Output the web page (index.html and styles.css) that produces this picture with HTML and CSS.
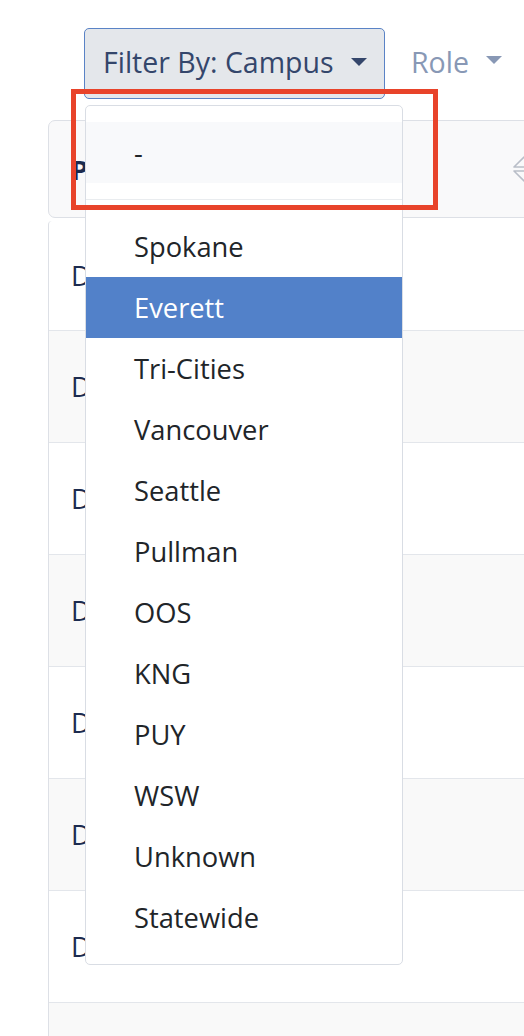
FILE: index.html
```html
<!DOCTYPE html>
<html>
<head>
<meta charset="utf-8">
<link rel="stylesheet" href="styles.css">
</head>
<body>
<div class="page">
  <div class="toolbar">
    <div class="filter">
      <button class="btn-filter">Filter By: Campus <span class="caret"></span></button>
      <div class="menu">
        <div class="item item-blank">-</div>
        <div class="divider"></div>
        <div class="item">Spokane</div>
        <div class="item active">Everett</div>
        <div class="item">Tri-Cities</div>
        <div class="item">Vancouver</div>
        <div class="item">Seattle</div>
        <div class="item">Pullman</div>
        <div class="item">OOS</div>
        <div class="item">KNG</div>
        <div class="item">PUY</div>
        <div class="item">WSW</div>
        <div class="item">Unknown</div>
        <div class="item">Statewide</div>
      </div>
    </div>
    <button class="btn-role">Role <span class="caret caret-light"></span></button>
  </div>
  <div class="table">
    <div class="thead">
      <span class="th">P</span>
      <svg class="sort" width="24" height="26" viewBox="0 0 24 26"><path d="M12 1 L2 11 L22 11 Z M2 15 L22 15 L12 25 Z" fill="none" stroke="#b9bec8" stroke-width="1.6" stroke-linejoin="round"/></svg>
    </div>
    <div class="tbody">
      <div class="row row-first">D</div>
      <div class="row alt">D</div>
      <div class="row">D</div>
      <div class="row alt">D</div>
      <div class="row">D</div>
      <div class="row alt">D</div>
      <div class="row">D</div>
      <div class="row alt"></div>
    </div>
  </div>
  <div class="highlight-box"></div>
</div>
</body>
</html>
```
FILE: styles.css
```css
html, body {
  margin: 0;
  padding: 0;
  background: #ffffff;
}
body {
  width: 524px;
  height: 1036px;
  overflow: hidden;
  font-family: "Open Sans", "Liberation Sans", sans-serif;
}
.page {
  position: relative;
  width: 524px;
  height: 1036px;
  overflow: hidden;
}
.toolbar {
  display: flex;
  align-items: flex-start;
  padding: 28px 0 0 84px;
  gap: 26px;
  height: 120px;
  box-sizing: border-box;
}
.filter {
  position: relative;
}
.btn-filter, .btn-role {
  font-family: inherit;
  font-size: 28.5px;
  display: flex;
  align-items: center;
  gap: 17px;
  cursor: pointer;
  padding-bottom: 4px;
}
.btn-filter {
  height: 71px;
  width: 301px;
  padding-left: 18px;
  padding-right: 0;
  padding-top: 0;
  box-sizing: border-box;
  background: #e4e7eb;
  border: 1.5px solid #5a83c6;
  border-radius: 5px;
  color: #34466b;
  white-space: nowrap;
}
.btn-role {
  height: 71px;
  padding-left: 0;
  padding-right: 0;
  padding-top: 0;
  box-sizing: border-box;
  background: none;
  border: none;
  color: #8898b5;
}
.caret {
  display: inline-block;
  width: 0;
  height: 0;
  border-left: 8px solid transparent;
  border-right: 8px solid transparent;
  border-top: 8px solid #34466b;
  margin-top: 0;
}
.caret-light {
  border-top-color: #8898b5;
  margin-top: -3px;
}
.menu {
  position: absolute;
  left: 1px;
  top: 77px;
  width: 318px;
  box-sizing: border-box;
  background: #ffffff;
  border: 1.5px solid #d9dde4;
  border-radius: 5px;
  padding: 16px 0;
  z-index: 5;
}
.item {
  height: 61px;
  line-height: 61px;
  padding-left: 48px;
  font-size: 27.3px;
  color: #212529;
}
.item-blank {
  background: #f8f9fb;
}
.item.active {
  background: #5281c9;
  color: #ffffff;
}
.divider {
  border-top: 1.5px solid #e9ecef;
  margin: 16px 0;
}
.table {
  margin-left: 48px;
  width: 520px;
}
.thead {
  height: 98px;
  box-sizing: border-box;
  border: 1.5px solid #dde0e6;
  border-radius: 7px;
  background: #f9f9fa;
  display: flex;
  align-items: center;
  padding-left: 22px;
  position: relative;
}
.th {
  font-weight: 700;
  font-size: 27.3px;
  color: #1c2b4f;
}
.sort {
  position: absolute;
  left: 463px;
  top: 35px;
}
.tbody {
  margin-top: 3px;
  border-left: 1.5px solid #dde0e6;
  border-top-left-radius: 4px;
}
.row {
  height: 112px;
  box-sizing: border-box;
  border-bottom: 1.5px solid #e3e6eb;
  display: flex;
  align-items: center;
  padding-left: 22px;
  font-size: 27.3px;
  color: #1c2b4f;
}
.row-first {
  height: 110px;
}
.row.alt {
  background: #f9f9f9;
}
.highlight-box {
  position: absolute;
  left: 71px;
  top: 89px;
  width: 367px;
  height: 121px;
  box-sizing: border-box;
  border: 5px solid #e8432a;
  z-index: 10;
}
```
